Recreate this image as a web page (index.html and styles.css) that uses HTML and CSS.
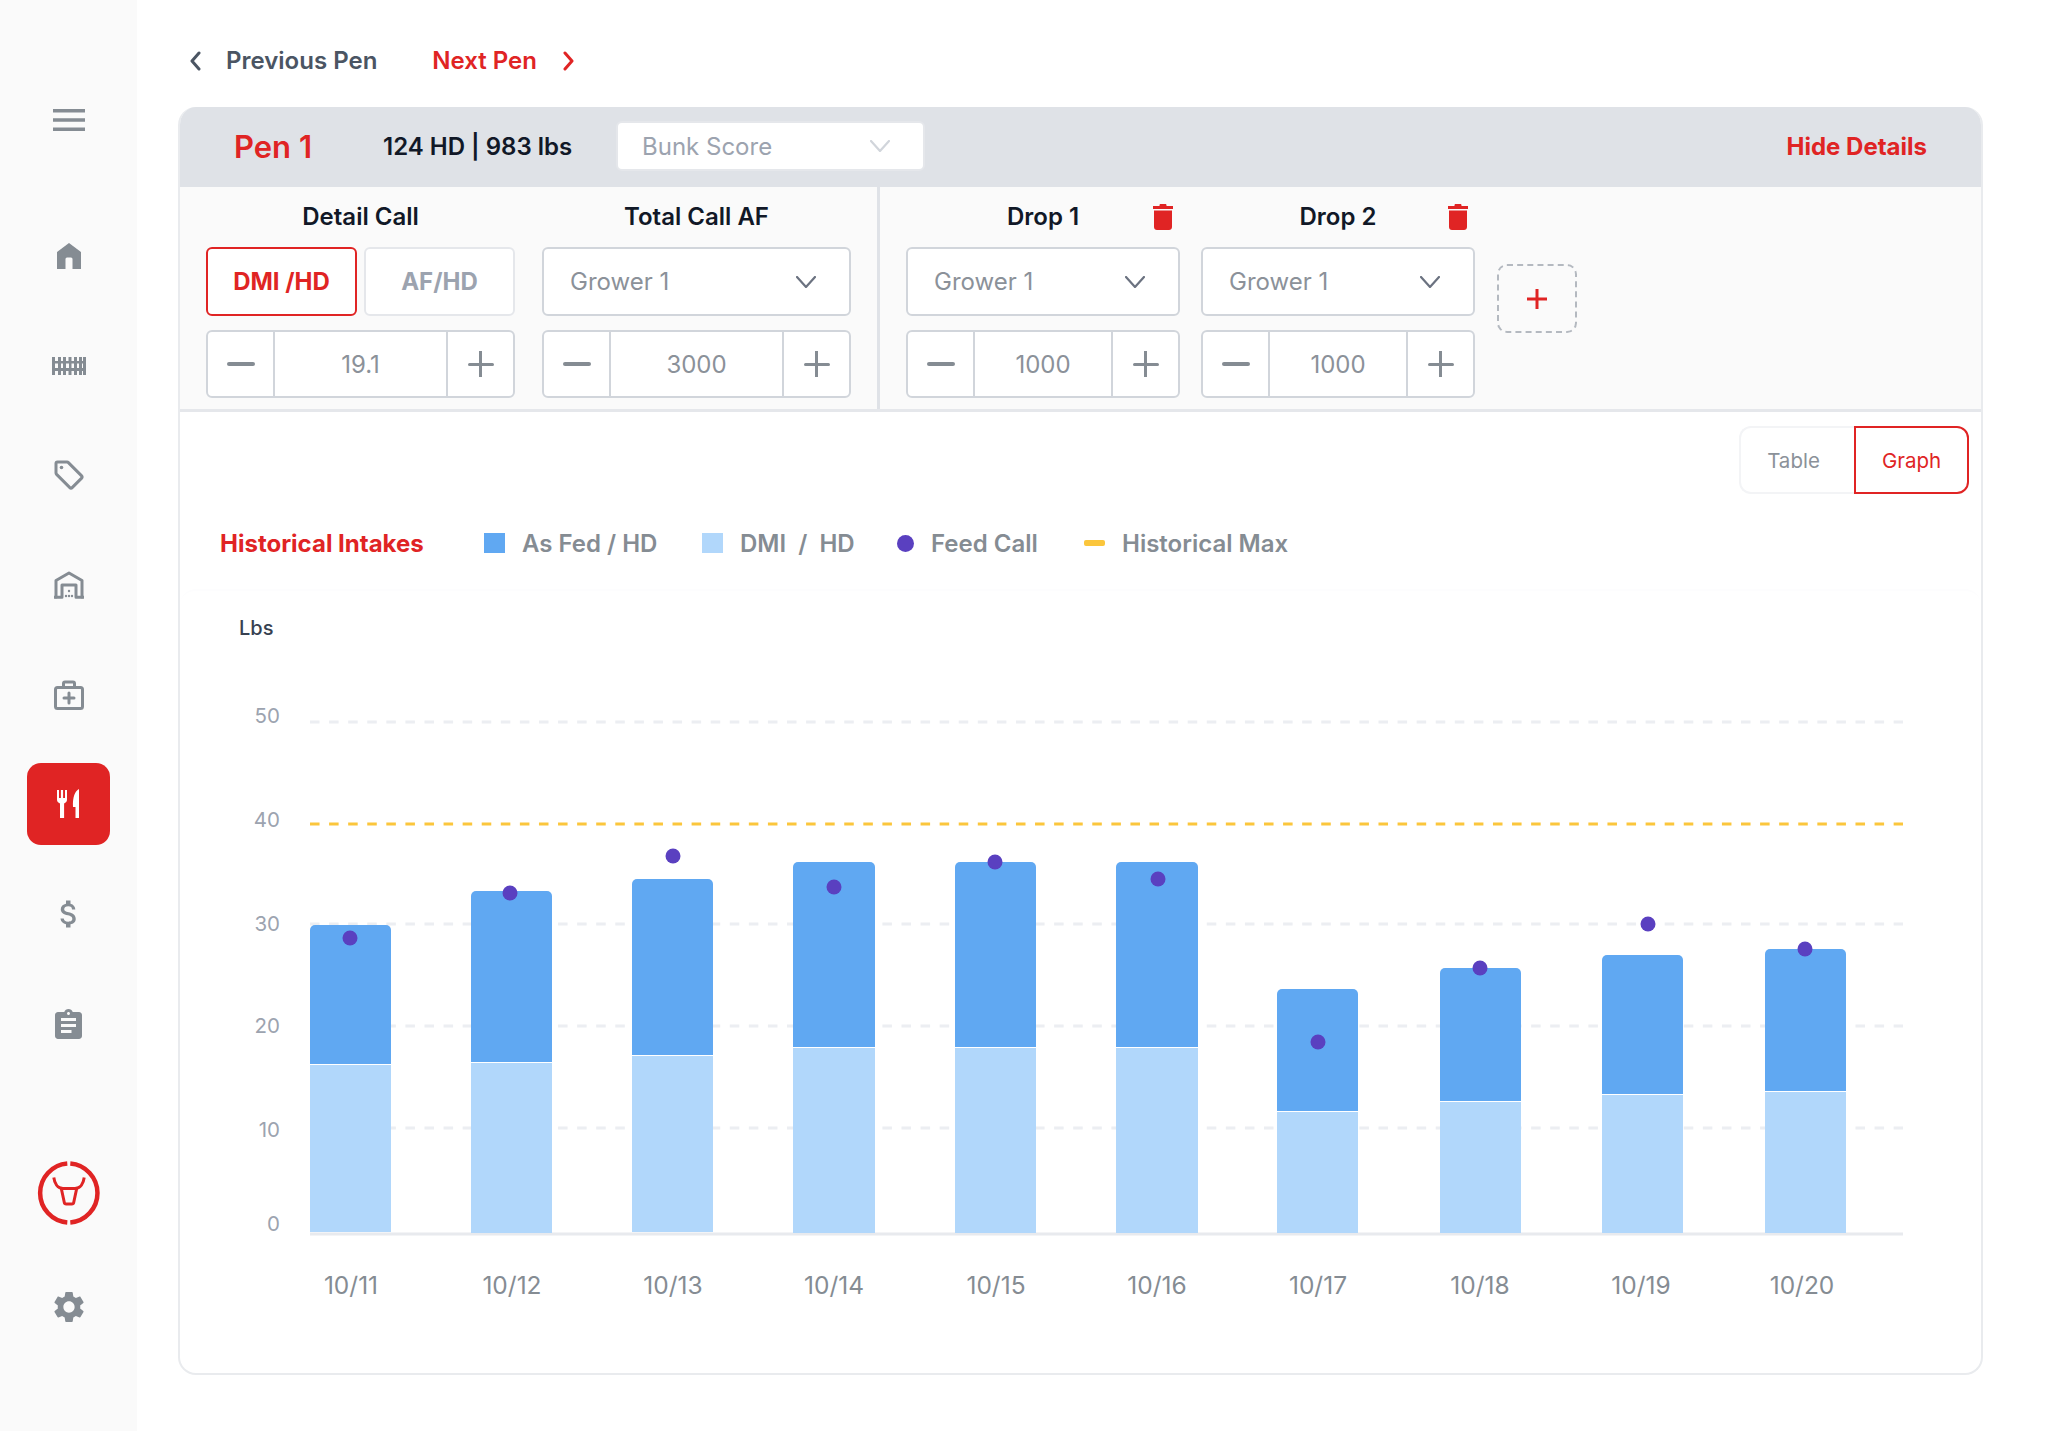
FILE: index.html
```html
<!DOCTYPE html>
<html lang="en">
<head>
<meta charset="utf-8">
<title>Pen 1</title>
<link rel="stylesheet" href="styles.css">
</head>
<body>
<div class="app">
  <aside class="sidebar">
    <div class="side-item side-menu"><svg class="ic" width="32" height="24" viewBox="0 0 32 24"><path d="M0 1h32v3.400H0zM0 10.300h32v3.400H0zM0 19.600h32V23H0z"/></svg></div>
    <div class="side-list">
      <div class="side-item"><svg class="ic" width="24" height="26" viewBox="0 0 24 26"><path d="M12 0 24 9v17h-8.500V16a1.500 1.500 0 0 0-1.500-1.500h-4A1.500 1.500 0 0 0 8.500 16v10H0V9z"/></svg></div>
      <div class="side-item"><svg class="ic" width="34" height="18" viewBox="0 0 34 18"><path d="M0 0h3v4h3V0h3v4h2V0h3v4h2.500V0h3v4H22V0h3v4h2V0h3v4h1V0h3v18h-3v-4h-1v4h-3v-4h-2v4h-3v-4h-2.500v4h-3v-4H14v4h-3v-4H9v4H6v-4H3v4H0zm3 6.500V11h3V6.500zm6 0V11h2V6.500zm5 0V11h3V6.500zm5.500 0V11H22V6.500zm5.500 0V11h2V6.500zm5 0V11h1V6.500z"/></svg></div>
      <div class="side-item"><svg class="ic-line" width="30" height="30" viewBox="0 0 30 30"><path d="M2 3.500a1.500 1.500 0 0 1 1.500-1.500H13a2 2 0 0 1 1.400.6l13 13a2 2 0 0 1 0 2.800l-9 9a2 2 0 0 1-2.800 0l-13-13A2 2 0 0 1 2 13z"/><circle class="ic-dot" cx="7.500" cy="7.500" r="1.800"/></svg></div>
      <div class="side-item"><svg class="ic-line" width="30" height="28" viewBox="0 0 30 28"><path d="M2 26V9.500L15 2l13 7.500V26"/><path d="M8 26V14h14v12M0 26.300h8M22 26.300h8"/><circle class="ic-dot" cx="15" cy="20" r="1.200"/><circle class="ic-dot" cx="12" cy="25" r="1.200"/><circle class="ic-dot" cx="15" cy="25" r="1.200"/><circle class="ic-dot" cx="18" cy="25" r="1.200"/></svg></div>
      <div class="side-item"><svg class="ic-line" width="30" height="30" viewBox="0 0 30 30"><rect x="1.500" y="7.500" width="27" height="21" rx="2"/><path d="M9.500 7V3.500a1.500 1.500 0 0 1 1.500-1.500h8a1.500 1.500 0 0 1 1.500 1.500V7M15 13v10M10 18h10"/></svg></div>
      <div class="side-item side-active"><svg class="ic-white" width="24" height="30" viewBox="0 0 24 30"><path d="M0 1h2v8h1.900V1h2.200v8H8V1h2v9.500c0 2-1.200 3.400-2.900 3.900V29H3v-14.600c-1.800-.5-3-1.900-3-3.900zM22 0v29h-3.500V18H16c-.5-10 2-16 6-18z"/></svg></div>
      <div class="side-item"><svg class="ic" width="30" height="30" viewBox="3 2 18 20"><path d="M11.800 10.900c-2.270-.59-3-1.200-3-2.150 0-1.090 1.010-1.850 2.700-1.850 1.780 0 2.440.85 2.500 2.100h2.210c-.07-1.720-1.120-3.300-3.210-3.810V3h-3v2.160c-1.940.42-3.500 1.680-3.500 3.610 0 2.310 1.910 3.460 4.700 4.130 2.500.6 3 1.480 3 2.410 0 .69-.49 1.790-2.700 1.790-2.060 0-2.870-.92-2.980-2.100h-2.200c.12 2.190 1.760 3.420 3.680 3.830V21h3v-2.150c1.950-.37 3.500-1.500 3.500-3.550 0-2.840-2.430-3.810-4.700-4.400z"/></svg></div>
      <div class="side-item"><svg class="ic" width="27" height="30" viewBox="3 1 18 20"><path d="M19 3h-4.180C14.400 1.840 13.300 1 12 1c-1.300 0-2.400.84-2.820 2H5c-1.100 0-2 .9-2 2v14c0 1.100.9 2 2 2h14c1.100 0 2-.9 2-2V5c0-1.100-.9-2-2-2zm-7 0c.55 0 1 .45 1 1s-.45 1-1 1-1-.45-1-1 .45-1 1-1zm2 14H7v-2h7v2zm3-4H7v-2h10v2zm0-4H7V7h10v2z"/></svg></div>
    </div>
    <div class="side-logo"><svg width="66" height="66" viewBox="0 0 66 66"><path class="logo-ring" d="M31.300 3.500A29.600 29.600 0 0 0 31.300 62.500M34.300 3.500A29.600 29.600 0 0 1 34.300 62.500"/><path class="logo-bull" d="M17.800 17.500C18.500 23 21.500 28.500 27 28.500h12c5.500 0 8.500-5.500 9.200-11M25.300 28.500l3 14c.2 1.100.9 1.500 1.900 1.500h5.600c1 0 1.700-.4 1.900-1.500l3-14"/></svg></div>
    <div class="side-gear"><svg class="ic" width="30" height="30" viewBox="2.400 2.400 19.200 19.200"><path d="M19.140 12.940c.04-.3.06-.61.06-.94 0-.32-.02-.64-.07-.94l2.030-1.580c.18-.14.23-.41.12-.61l-1.920-3.320c-.12-.22-.37-.29-.59-.22l-2.390.96c-.5-.38-1.030-.7-1.620-.94L14.400 2.810c-.04-.24-.24-.41-.48-.41h-3.840c-.24 0-.43.17-.47.41L9.250 5.350C8.660 5.590 8.120 5.920 7.630 6.290L5.240 5.330c-.22-.08-.47 0-.59.22L2.740 8.870C2.620 9.080 2.660 9.340 2.860 9.480l2.030 1.580C4.840 11.360 4.800 11.690 4.800 12s.02.64.07.94l-2.030 1.580c-.18.14-.23.41-.12.61l1.920 3.320c.12.22.37.29.59.22l2.390-.96c.5.38 1.030.7 1.620.94l.36 2.540c.05.24.24.41.48.41h3.840c.24 0 .44-.17.47-.41l.36-2.540c.59-.24 1.130-.56 1.620-.94l2.390.96c.22.08.47 0 .59-.22l1.920-3.320c.12-.22.07-.47-.12-.61L19.140 12.940zM12 15.600c-1.980 0-3.600-1.620-3.600-3.600s1.620-3.600 3.600-3.600 3.600 1.620 3.600 3.600S13.980 15.600 12 15.600z"/></svg></div>
  </aside>

  <main class="main">
    <nav class="pager">
      <a class="pager-prev"><svg class="chev" width="12" height="20" viewBox="0 0 12 20"><path d="M10 2 3 10l7 8"/></svg><span>Previous Pen</span></a>
      <a class="pager-next"><span>Next Pen</span><svg class="chev" width="12" height="20" viewBox="0 0 12 20"><path d="m2 2 7 8-7 8"/></svg></a>
    </nav>

    <section class="card">
      <header class="card-head">
        <h1 class="pen-name">Pen 1</h1>
        <div class="pen-stats">124 HD | 983 lbs</div>
        <div class="bunk-select"><span>Bunk Score</span><svg class="caret caret-light" width="20" height="12" viewBox="0 0 20 12"><path d="m1 1 9 10 9-10"/></svg></div>
        <a class="hide-link">Hide Details</a>
      </header>

      <div class="details">
        <div class="details-left">
          <div class="col">
            <div class="col-title">Detail Call</div>
            <div class="seg">
              <button class="seg-btn is-on">DMI /HD</button>
              <button class="seg-btn">AF/HD</button>
            </div>
            <div class="stepper"><span class="step-btn"><i class="minus"></i></span><span class="step-val">19.1</span><span class="step-btn"><i class="plus"></i></span></div>
          </div>
          <div class="col">
            <div class="col-title">Total Call AF</div>
            <div class="select"><span>Grower 1</span><svg class="caret" width="20" height="12" viewBox="0 0 20 12"><path d="m1 1 9 10 9-10"/></svg></div>
            <div class="stepper"><span class="step-btn"><i class="minus"></i></span><span class="step-val">3000</span><span class="step-btn"><i class="plus"></i></span></div>
          </div>
        </div>
        <div class="details-right">
          <div class="col col-drop">
            <div class="col-title col-title-drop"><span></span><span>Drop 1</span><svg class="trash" width="20" height="26" viewBox="0 0 20 26"><path d="M6.500 2V1.200C6.500.5 7 0 7.700 0h4.600c.7 0 1.200.5 1.200 1.200V2H20v3H0V2zM1 6.500h18V23c0 1.700-1.300 3-3 3H4c-1.700 0-3-1.300-3-3z"/></svg></div>
            <div class="select"><span>Grower 1</span><svg class="caret" width="20" height="12" viewBox="0 0 20 12"><path d="m1 1 9 10 9-10"/></svg></div>
            <div class="stepper"><span class="step-btn"><i class="minus"></i></span><span class="step-val">1000</span><span class="step-btn"><i class="plus"></i></span></div>
          </div>
          <div class="col col-drop">
            <div class="col-title col-title-drop"><span></span><span>Drop 2</span><svg class="trash" width="20" height="26" viewBox="0 0 20 26"><path d="M6.500 2V1.200C6.500.5 7 0 7.700 0h4.600c.7 0 1.200.5 1.200 1.200V2H20v3H0V2zM1 6.500h18V23c0 1.700-1.300 3-3 3H4c-1.700 0-3-1.300-3-3z"/></svg></div>
            <div class="select"><span>Grower 1</span><svg class="caret" width="20" height="12" viewBox="0 0 20 12"><path d="m1 1 9 10 9-10"/></svg></div>
            <div class="stepper"><span class="step-btn"><i class="minus"></i></span><span class="step-val">1000</span><span class="step-btn"><i class="plus"></i></span></div>
          </div>
          <div class="add-drop"><svg width="20" height="20" viewBox="0 0 20 20"><path d="M8.500 0h3v8.500H20v3h-8.500V20h-3v-8.500H0v-3h8.500z"/></svg></div>
        </div>
      </div>

      <div class="toggle-row">
        <div class="toggle"><span class="toggle-opt toggle-table">Table</span><span class="toggle-opt is-on">Graph</span></div>
      </div>

      <div class="legend">
        <h2 class="legend-title">Historical Intakes</h2>
        <div class="legend-item legend-af"><i class="sw sw-af"></i>As Fed / HD</div>
        <div class="legend-item legend-dmi"><i class="sw sw-dmi"></i><span>DMI &nbsp;/&nbsp; HD</span></div>
        <div class="legend-item legend-call"><i class="sw sw-call"></i>Feed Call</div>
        <div class="legend-item legend-max"><i class="sw sw-max"></i>Historical Max</div>
      </div>

      <div class="chart-panel">
        <svg class="chart" width="1801" height="781" viewBox="180 591 1801 781">
          <text class="t-unit" x="239" y="635">Lbs</text>

          <path class="grid" d="M310 722H1903M310 924H1903M310 1026H1903M310 1128H1903"/>
          <path class="grid-max" d="M310 824H1903"/>
          <path class="axis" d="M310 1234H1903"/>

          <g class="t-y">
            <text x="280" y="723">50</text>
            <text x="280" y="827">40</text>
            <text x="280" y="931">30</text>
            <text x="280" y="1033">20</text>
            <text x="280" y="1137">10</text>
            <text x="280" y="1231">0</text>
          </g>

          <g class="bars-af">
            <path d="M310 1064V930a5 5 0 0 1 5-5h71a5 5 0 0 1 5 5v134z"/>
            <path d="M471 1062V896a5 5 0 0 1 5-5h71a5 5 0 0 1 5 5v166z"/>
            <path d="M632 1055V884a5 5 0 0 1 5-5h71a5 5 0 0 1 5 5v171z"/>
            <path d="M793 1047V867a5 5 0 0 1 5-5h72a5 5 0 0 1 5 5v180z"/>
            <path d="M955 1047V867a5 5 0 0 1 5-5h71a5 5 0 0 1 5 5v180z"/>
            <path d="M1116 1047V867a5 5 0 0 1 5-5h72a5 5 0 0 1 5 5v180z"/>
            <path d="M1277 1111V994a5 5 0 0 1 5-5h71a5 5 0 0 1 5 5v117z"/>
            <path d="M1440 1101V973a5 5 0 0 1 5-5h71a5 5 0 0 1 5 5v128z"/>
            <path d="M1602 1094V960a5 5 0 0 1 5-5h71a5 5 0 0 1 5 5v134z"/>
            <path d="M1765 1091V954a5 5 0 0 1 5-5h71a5 5 0 0 1 5 5v137z"/>
          </g>
          <g class="bars-dmi">
            <rect x="310" y="1065" width="81" height="167"/>
            <rect x="471" y="1063" width="81" height="170"/>
            <rect x="632" y="1056" width="81" height="176"/>
            <rect x="793" y="1048" width="82" height="185"/>
            <rect x="955" y="1048" width="81" height="185"/>
            <rect x="1116" y="1048" width="82" height="185"/>
            <rect x="1277" y="1112" width="81" height="121"/>
            <rect x="1440" y="1102" width="81" height="131"/>
            <rect x="1602" y="1095" width="81" height="138"/>
            <rect x="1765" y="1092" width="81" height="141"/>
          </g>
          <g class="dots">
            <circle cx="350" cy="938" r="7.500"/>
            <circle cx="510" cy="893" r="7.500"/>
            <circle cx="673" cy="856" r="7.500"/>
            <circle cx="834" cy="887" r="7.500"/>
            <circle cx="995" cy="862" r="7.500"/>
            <circle cx="1158" cy="879" r="7.500"/>
            <circle cx="1318" cy="1042" r="7.500"/>
            <circle cx="1480" cy="968" r="7.500"/>
            <circle cx="1648" cy="924" r="7.500"/>
            <circle cx="1805" cy="949" r="7.500"/>
          </g>

          <g class="t-x">
            <text x="351" y="1294">10/11</text>
            <text x="512" y="1294">10/12</text>
            <text x="673" y="1294">10/13</text>
            <text x="834" y="1294">10/14</text>
            <text x="996" y="1294">10/15</text>
            <text x="1157" y="1294">10/16</text>
            <text x="1318" y="1294">10/17</text>
            <text x="1480" y="1294">10/18</text>
            <text x="1641" y="1294">10/19</text>
            <text x="1802" y="1294">10/20</text>
          </g>
        </svg>
      </div>
    </section>
  </main>
</div>
</body>
</html>
```

FILE: styles.css
```css
* { box-sizing: border-box; }
html, body { margin: 0; padding: 0; background: #fff; }
body { font-family: Inter, "Liberation Sans", sans-serif; color: #111; }
button { font: inherit; }
h1, h2 { margin: 0; font: inherit; }

.app { display: flex; width: 2048px; height: 1431px; overflow: hidden; }

/* Sidebar */
.sidebar {
  width: 137px;
  flex: none;
  background: #fafafa;
  display: flex;
  flex-direction: column;
  align-items: center;
  padding-top: 79px;
}
.side-list { display: flex; flex-direction: column; gap: 27.7px; margin-top: 54px; }
.side-item {
  width: 83px;
  height: 82px;
  display: flex;
  align-items: center;
  justify-content: center;
  border-radius: 14px;
}
.side-active { background: #e02424; }
.ic { fill: #858c93; }
.ic-line { fill: none; stroke: #858c93; stroke-width: 3; stroke-linejoin: round; stroke-linecap: round; }
.ic-dot { fill: #858c93; stroke: none; }
.ic-white { fill: #fff; }
.side-logo { margin-top: 95px; height: 66px; }
.logo-ring { fill: none; stroke: #e02424; stroke-width: 4.500; }
.logo-bull { fill: none; stroke: #e02424; stroke-width: 3; stroke-linejoin: round; }
.side-gear { margin-top: 66px; height: 30px; }

/* Main */
.main { flex: 1; padding-left: 41px; }
.pager { display: flex; align-items: center; height: 107px; padding: 14px 0 0 11px; gap: 55px; font-size: 24px; font-weight: 600; line-height: 1; }
.pager-prev, .pager-next { display: flex; align-items: center; }
.pager-prev { color: #4b5563; gap: 25px; }
.pager-next { color: #e02424; gap: 26px; }
.chev { fill: none; stroke: currentColor; stroke-width: 3; stroke-linecap: round; stroke-linejoin: round; }

.card {
  width: 1805px;
  height: 1268px;
  border: 2px solid #e9ebee;
  border-top: 0;
  border-radius: 18px;
  overflow: hidden;
  background: #fff;
}
.card-head {
  height: 80px;
  background: #dfe2e7;
  display: flex;
  align-items: center;
  padding: 0 54px 2px 54px;
}
.pen-name { font-size: 31px; font-weight: 600; color: #e02424; width: 149px; }
.pen-stats { font-size: 24px; font-weight: 600; color: #111827; width: 233px; white-space: nowrap; }
.bunk-select {
  width: 309px;
  height: 50px;
  background: #fff;
  border: 2px solid #e5e7eb;
  border-radius: 6px;
  display: flex;
  align-items: center;
  justify-content: space-between;
  padding: 0 33px 0 24px;
  font-size: 24px;
  color: #9ca3af;
}
.hide-link { margin-left: auto; color: #e02424; font-size: 24px; font-weight: 700; }
.caret { fill: none; stroke: #6b7280; stroke-width: 2.200; stroke-linecap: round; stroke-linejoin: round; }
.caret-light { stroke: #d1d5db; }

.details { display: flex; height: 225px; background: #fafafa; border-bottom: 3px solid #e5e7eb; }
.details-left { width: 700px; display: flex; gap: 27px; padding: 5px 0 0 26px; border-right: 3px solid #dfe2e7; }
.details-right { flex: 1; display: flex; gap: 21px; padding: 5px 0 0 26px; }
.col { width: 309px; display: flex; flex-direction: column; gap: 14px; }
.col-drop { width: 274px; }
.col-title { height: 48px; margin-bottom: -7px; text-align: center; font-size: 24px; font-weight: 600; line-height: 50px; color: #111827; }
.col-title-drop { display: grid; grid-template-columns: 1fr auto 1fr; align-items: center; }
.trash { fill: #e02424; justify-self: end; margin-right: 7px; }

.seg { display: flex; gap: 7px; height: 69px; }
.seg-btn {
  width: 151px;
  border: 2px solid #e5e7eb;
  border-radius: 6px;
  background: #fff;
  color: #9ca3af;
  font-size: 24px;
  font-weight: 700;
  padding: 0;
}
.seg-btn.is-on { border-color: #e02424; color: #e02424; }

.select {
  height: 69px;
  background: #fff;
  border: 2px solid #d1d5db;
  border-radius: 6px;
  display: flex;
  align-items: center;
  justify-content: space-between;
  padding: 0 33px 0 26px;
  font-size: 24px;
  color: #8b9199;
}
.stepper {
  height: 68px;
  background: #fff;
  border: 2px solid #d1d5db;
  border-radius: 6px;
  display: flex;
  font-size: 24px;
  color: #8b9199;
}
.step-btn { width: 65px; flex: none; display: flex; align-items: center; justify-content: center; }
.step-val { flex: 1; display: flex; align-items: center; justify-content: center; border-left: 2px solid #d1d5db; border-right: 2px solid #d1d5db; }
.minus, .plus { display: block; position: relative; width: 28px; height: 4px; background: #858c93; border-radius: 2px; }
.plus { width: 26px; height: 3px; }
.plus::after { content: ""; position: absolute; left: 11.500px; top: -11.500px; width: 3px; height: 26px; background: #858c93; }

.add-drop {
  width: 80px;
  height: 69px;
  margin: 72px 0 0 1px;
  border: 2px dashed #b4b9c0;
  border-radius: 10px;
  display: flex;
  align-items: center;
  justify-content: center;
}
.add-drop svg { fill: #e02424; }

.toggle-row { display: flex; justify-content: flex-end; padding: 14px 12px 0 0; }
.toggle { display: flex; height: 68px; font-size: 20.500px; }
.toggle-opt { width: 115px; display: flex; align-items: center; justify-content: center; color: #8b9199; border: 2px solid #f3f4f6; border-right: 0; border-radius: 12px 0 0 12px; }
.toggle-table { padding-right: 8px; }
.toggle-opt.is-on { color: #e02424; border: 2px solid #e02424; border-radius: 0 12px 12px 0; }

.legend { display: flex; align-items: center; height: 30px; margin-top: 34px; padding-left: 40px; font-size: 24px; font-weight: 600; color: #858c93; white-space: nowrap; }
.legend-title { color: #e02424; font-size: 24px; font-weight: 700; width: 264px; }
.legend-item { display: flex; align-items: center; }
.legend-af { width: 218px; }
.legend-dmi { width: 195px; }
.legend-call { width: 187px; }
.sw { display: block; flex: none; margin-right: 17px; width: 21px; height: 20px; }
.sw-af { background: #60a8f2; }
.sw-dmi { background: #b1d7fb; }
.sw-call { width: 17px; height: 17px; border-radius: 50%; background: #5a40c0; margin-right: 17px; }
.sw-max { height: 6px; background: #fbc63c; border-radius: 2px; margin-right: 17px; }

.chart-panel { margin-top: 31px; border-top: 2px solid #fdfdfe; border-radius: 16px; }
.chart { display: block; }
.t-unit { font-size: 20px; font-weight: 500; fill: #374151; }
.t-y text { font-size: 20.500px; fill: #9ca3af; text-anchor: end; }
.t-x text { font-size: 24.500px; fill: #858c93; text-anchor: middle; }
.grid { fill: none; stroke: #eceef2; stroke-width: 3; stroke-dasharray: 9.540 9.540; }
.grid-max { fill: none; stroke: #fbc63c; stroke-width: 3; stroke-dasharray: 9.540 9.540; }
.axis { fill: none; stroke: #e8eaee; stroke-width: 3; }
.bars-af { fill: #60a8f2; }
.bars-dmi { fill: #b1d7fb; }
.dots { fill: #5a40c0; }
```
